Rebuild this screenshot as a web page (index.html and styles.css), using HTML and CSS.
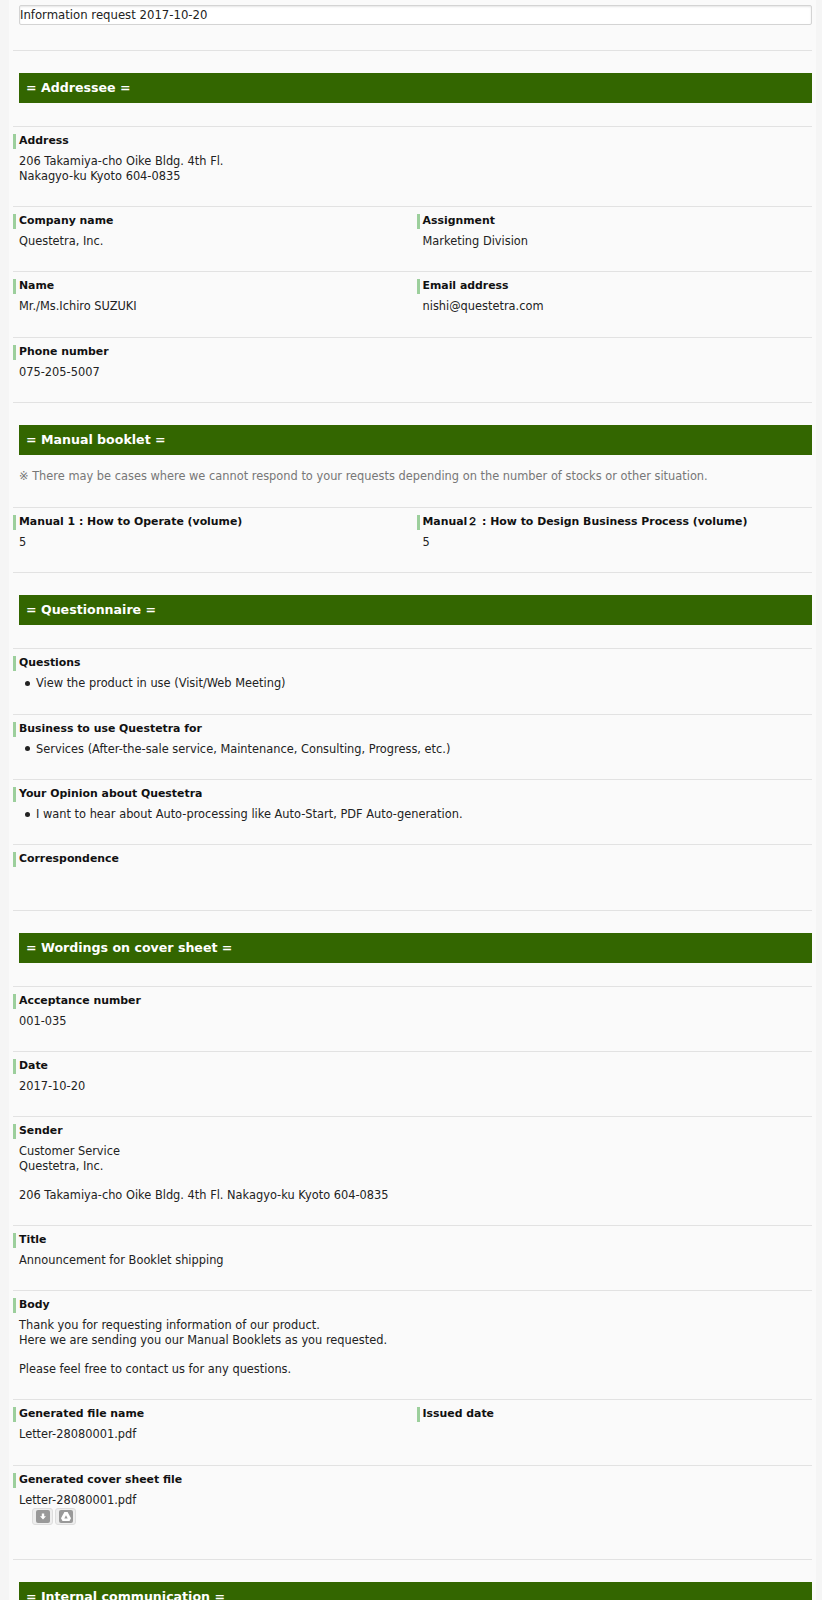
FILE: index.html
```html
<!DOCTYPE html>
<html lang="en">
<head>
    <meta charset="UTF-8">
    <title>Information request</title>
    <link rel="stylesheet" href="styles.css">
</head>
<body>
<div class="form">
    <div class="title-box"><div class="title-input">Information request 2017-10-20</div></div>

    <div class="heading-row"><h2 class="heading">= Addressee =</h2></div>
    <div class="row"><div class="field"><div class="label">Address</div><div class="value">206 Takamiya-cho Oike Bldg. 4th Fl.<br>Nakagyo-ku Kyoto 604-0835</div></div></div>
    <div class="row two">
        <div class="field"><div class="label">Company name</div><div class="value">Questetra, Inc.</div></div>
        <div class="field"><div class="label">Assignment</div><div class="value">Marketing Division</div></div>
    </div>
    <div class="row two">
        <div class="field"><div class="label">Name</div><div class="value">Mr./Ms.Ichiro SUZUKI</div></div>
        <div class="field"><div class="label">Email address</div><div class="value">nishi@questetra.com</div></div>
    </div>
    <div class="row"><div class="field"><div class="label">Phone number</div><div class="value">075-205-5007</div></div></div>

    <div class="heading-row">
        <h2 class="heading">= Manual booklet =</h2>
        <p class="note">※ There may be cases where we cannot respond to your requests depending on the number of stocks or other situation.</p>
    </div>
    <div class="row two">
        <div class="field"><div class="label">Manual 1 : How to Operate (volume)</div><div class="value">5</div></div>
        <div class="field"><div class="label">Manual２ : How to Design Business Process (volume)</div><div class="value">5</div></div>
    </div>

    <div class="heading-row"><h2 class="heading">= Questionnaire =</h2></div>
    <div class="row"><div class="field"><div class="label">Questions</div><ul class="choices"><li>View the product in use (Visit/Web Meeting)</li></ul></div></div>
    <div class="row"><div class="field"><div class="label">Business to use Questetra for</div><ul class="choices"><li>Services (After-the-sale service, Maintenance, Consulting, Progress, etc.)</li></ul></div></div>
    <div class="row"><div class="field"><div class="label">Your Opinion about Questetra</div><ul class="choices"><li>I want to hear about Auto-processing like Auto-Start, PDF Auto-generation.</li></ul></div></div>
    <div class="row"><div class="field"><div class="label">Correspondence</div><div class="value">&nbsp;</div></div></div>

    <div class="heading-row"><h2 class="heading">= Wordings on cover sheet =</h2></div>
    <div class="row"><div class="field"><div class="label">Acceptance number</div><div class="value">001-035</div></div></div>
    <div class="row"><div class="field"><div class="label">Date</div><div class="value">2017-10-20</div></div></div>
    <div class="row"><div class="field"><div class="label">Sender</div><div class="value">Customer Service<br>Questetra, Inc.<br><br>206 Takamiya-cho Oike Bldg. 4th Fl. Nakagyo-ku Kyoto 604-0835</div></div></div>
    <div class="row"><div class="field"><div class="label">Title</div><div class="value">Announcement for Booklet shipping</div></div></div>
    <div class="row"><div class="field"><div class="label">Body</div><div class="value">Thank you for requesting information of our product.<br>Here we are sending you our Manual Booklets as you requested.<br><br>Please feel free to contact us for any questions.</div></div></div>
    <div class="row two">
        <div class="field"><div class="label">Generated file name</div><div class="value">Letter-28080001.pdf</div></div>
        <div class="field"><div class="label">Issued date</div></div>
    </div>
    <div class="row">
        <div class="field">
            <div class="label">Generated cover sheet file</div>
            <div class="value">Letter-28080001.pdf</div>
            <div class="file-buttons">
                <span class="file-button"><svg width="14" height="13" viewBox="0 0 14 13"><rect width="14" height="13" rx="2" fill="#999"/><path d="M5.800 3.500h2.400v2.700h1.800L7 9.500 4 6.200h1.800z" fill="#fff"/></svg></span>
                <span class="file-button"><svg width="14" height="13" viewBox="0 0 14 13"><rect width="14" height="13" rx="2" fill="#999"/><path d="M5.400 2h3.200l3.400 6.300-1.500 2.700H3.500L2 8.300z" fill="#fff"/><path d="M7 5.300 8.700 8.600H5.300z" fill="#999"/></svg></span>
            </div>
        </div>
    </div>

    <div class="heading-row"><h2 class="heading">= Internal communication =</h2></div>
</div>
</body>
</html>
```

FILE: styles.css
```css
html, body {
    height: 100%;
}
body {
    margin: 0;
    background-color: #f5f5f5;
    font-family: Tahoma, "DejaVu Sans", sans-serif;
    font-size: 11.4px;
    color: #222;
    overflow: hidden;
}
.form {
    margin: 0 6px 0 9px;
    min-height: 100%;
    background-color: #fafafa;
    padding: 0 4px;
}
.title-box {
    padding: 5px 0 25px 6px;
}
.title-input {
    height: 18px;
    line-height: 18px;
    background-color: #fff;
    border: 1px solid #d4d4d4;
    border-radius: 2px;
    box-shadow: inset 0 1px 2px rgba(0, 0, 0, 0.1);
    font-size: 11.7px;
}
.heading-row {
    border-top: 1px solid #e2e2e2;
    padding: 22px 0 23px 6px;
}
.heading {
    margin: 0;
    height: 30px;
    line-height: 29px;
    padding-left: 7px;
    background-color: #336600;
    color: #fff;
    font-size: 12.6px;
    font-weight: bold;
}
.note {
    margin: 13px 0 0;
    color: #777;
    line-height: 16px;
}
.row {
    border-top: 1px solid #e2e2e2;
    padding: 7px 0 22.85px;
}
.two {
    display: grid;
    grid-template-columns: 403.5px 1fr;
}
.label {
    border-left: 3px solid #9ccf9c;
    padding: 0 0 1px 3px;
    font-size: 10.9px;
    font-weight: bold;
    line-height: 14px;
    color: #111;
}
.value {
    margin: 5px 0 0 6px;
    line-height: 14.5px;
}
.choices {
    margin: 5px 0 0 6px;
    padding: 0;
    line-height: 14.5px;
    list-style: none;
}
.choices li {
    display: flex;
    align-items: center;
}
.choices li::before {
    content: "";
    width: 5px;
    height: 5px;
    margin: 0 6px 0 6px;
    border-radius: 50%;
    background-color: #222;
}
.file-buttons {
    display: flex;
    gap: 2px;
    margin: 1px 0 11px 19px;
}
.file-button {
    display: flex;
    width: 21px;
    height: 17px;
    align-items: center;
    justify-content: center;
    background-color: #eee;
    border: 1px solid #ddd;
    border-radius: 3px;
    box-sizing: border-box;
}
```
